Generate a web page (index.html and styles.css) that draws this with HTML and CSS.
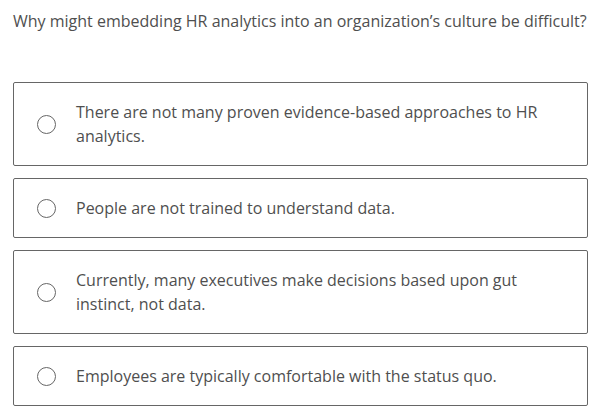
FILE: index.html
```html
<!DOCTYPE html>
<html>
<head>
<meta charset="utf-8">
<link rel="stylesheet" href="styles.css">
</head>
<body>
<div class="quiz">
  <p class="question">Why might embedding HR analytics into an organization’s culture be difficult?</p>
  <div class="options">
    <label class="option">
      <span class="radio"></span>
      <span class="text">There are not many proven evidence-based approaches to HR analytics.</span>
    </label>
    <label class="option">
      <span class="radio"></span>
      <span class="text">People are not trained to understand data.</span>
    </label>
    <label class="option">
      <span class="radio"></span>
      <span class="text">Currently, many executives make decisions based upon gut instinct, not data.</span>
    </label>
    <label class="option">
      <span class="radio"></span>
      <span class="text">Employees are typically comfortable with the status quo.</span>
    </label>
  </div>
</div>
</body>
</html>
```
FILE: styles.css
```css
html, body {
  margin: 0;
  padding: 0;
  background: #fff;
}
body {
  font-family: "Open Sans", "Liberation Sans", sans-serif;
  color: #4f4f4f;
}
.quiz {
  padding: 9px 14px 0 13px;
}
.question {
  margin: 0;
  font-size: 16px;
  line-height: 24px;
  white-space: nowrap;
}
.options {
  margin-top: 49px;
  display: flex;
  flex-direction: column;
  gap: 12px;
}
.option {
  display: flex;
  align-items: center;
  border: 1px solid #666;
  border-radius: 2px;
  padding: 17px 40px 17px 23px;
  font-size: 16px;
  line-height: 24px;
}
.radio {
  flex: none;
  width: 17px;
  height: 17px;
  border: 1.3px solid #666;
  border-radius: 50%;
  margin-right: 20px;
}
.text {
  flex: 1;
}
```
